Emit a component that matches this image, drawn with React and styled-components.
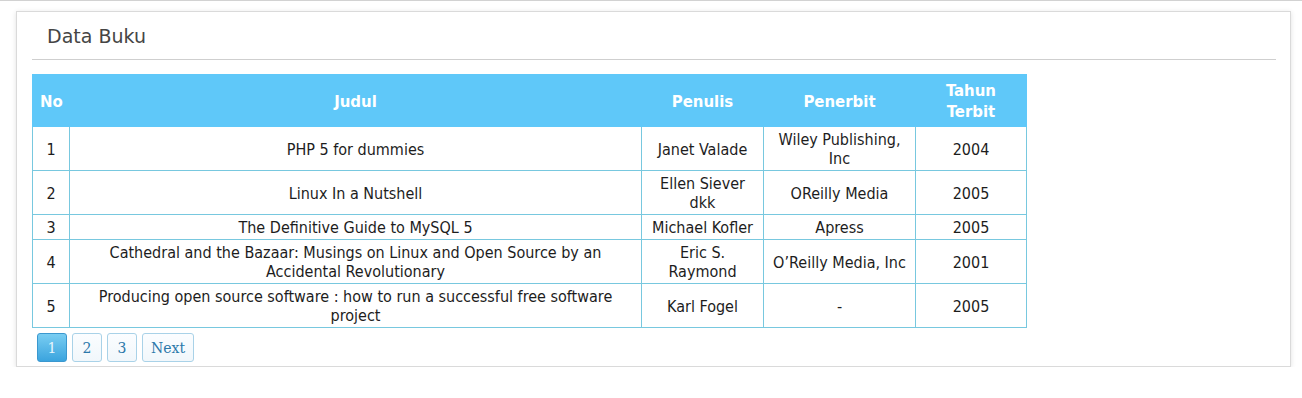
import React from "react";
import styled, { createGlobalStyle } from "styled-components";

const GlobalStyle = createGlobalStyle`
  html, body { margin: 0; padding: 0; background: #fff; }
  body { font-family: "DejaVu Sans", sans-serif; }
`;

const TopEdge = styled.div`
  height: 1px;
  background: #d2d2d2;
`;

const Card = styled.section`
  margin: 10px 11px 0 16px;
  border: 1px solid #dadada;
  box-shadow: 0 1px 5px rgba(0, 0, 0, 0.12);
  background: #fff;
  padding: 0 14px 4px 15px;
`;

const CardHeader = styled.div`
  padding: 13px 15px 12px;
  border-bottom: 1px solid #cfcfcf;
`;

const Title = styled.h3`
  margin: 0;
  font-family: "DejaVu Sans", sans-serif;
  font-weight: normal;
  font-size: 19px;
  line-height: 22px;
  color: #454545;
`;

const Table = styled.table`
  margin-top: 14px;
  width: 994px;
  table-layout: fixed;
  border-collapse: collapse;
  font-family: "DejaVu Sans Condensed", "DejaVu Sans", sans-serif;
  font-stretch: condensed;
  font-size: 16px;
  color: #1d1d1d;
`;

const Th = styled.th`
  background: #5fc8f9;
  color: #fff;
  font-weight: bold;
  font-size: 16.6px;
  line-height: 21px;
  padding: 5px 10px 4px ${(p) => (p.$left ? "7px" : "10px")};
  border: 1px solid #5fc8f9;
  text-align: ${(p) => (p.$left ? "left" : "center")};
`;

const Td = styled.td`
  border: 1px solid #78c8df;
  padding: 3px 5px 2px;
  line-height: 19px;
  text-align: center;
  vertical-align: middle;
`;

const Pager = styled.nav`
  display: flex;
  gap: 5px;
  margin: 5px 0 0 5px;
`;

const PageButton = styled.a`
  display: inline-flex;
  align-items: center;
  justify-content: center;
  box-sizing: border-box;
  height: 29px;
  min-width: 30px;
  padding: 0 8px;
  border-radius: 3px;
  font-family: "DejaVu Serif", serif;
  font-size: 14px;
  text-decoration: none;
  cursor: pointer;
  border: 1px solid ${(p) => (p.$active ? "#3b98cf" : "#a9d2e8")};
  color: ${(p) => (p.$active ? "#e8f6fd" : "#2b78aa")};
  background: ${(p) =>
    p.$active
      ? "linear-gradient(#79cdf2, #3ba4de)"
      : "linear-gradient(#fbfdff, #f1f7fb)"};
`;

const books = [
  { no: 1, judul: "PHP 5 for dummies", penulis: "Janet Valade", penerbit: "Wiley Publishing, Inc", tahun: "2004" },
  { no: 2, judul: "Linux In a Nutshell", penulis: "Ellen Siever dkk", penerbit: "OReilly Media", tahun: "2005" },
  { no: 3, judul: "The Definitive Guide to MySQL 5", penulis: "Michael Kofler", penerbit: "Apress", tahun: "2005" },
  { no: 4, judul: "Cathedral and the Bazaar: Musings on Linux and Open Source by an Accidental Revolutionary", penulis: "Eric S. Raymond", penerbit: "O’Reilly Media, Inc", tahun: "2001" },
  { no: 5, judul: "Producing open source software : how to run a successful free software project", penulis: "Karl Fogel", penerbit: "-", tahun: "2005" },
];

export default function App() {
  return (
    <>
      <GlobalStyle />
      <TopEdge />
      <Card>
        <CardHeader>
          <Title>Data Buku</Title>
        </CardHeader>
        <Table>
          <colgroup>
            <col style={{ width: 37 }} />
            <col style={{ width: 572 }} />
            <col style={{ width: 122 }} />
            <col style={{ width: 152 }} />
            <col style={{ width: 111 }} />
          </colgroup>
          <thead>
            <tr>
              <Th $left>No</Th>
              <Th>Judul</Th>
              <Th>Penulis</Th>
              <Th>Penerbit</Th>
              <Th>Tahun Terbit</Th>
            </tr>
          </thead>
          <tbody>
            {books.map((b) => (
              <tr key={b.no}>
                <Td>{b.no}</Td>
                <Td>{b.judul}</Td>
                <Td>{b.penulis}</Td>
                <Td>{b.penerbit}</Td>
                <Td>{b.tahun}</Td>
              </tr>
            ))}
          </tbody>
        </Table>
        <Pager>
          <PageButton $active>1</PageButton>
          <PageButton>2</PageButton>
          <PageButton>3</PageButton>
          <PageButton>Next</PageButton>
        </Pager>
      </Card>
    </>
  );
}
